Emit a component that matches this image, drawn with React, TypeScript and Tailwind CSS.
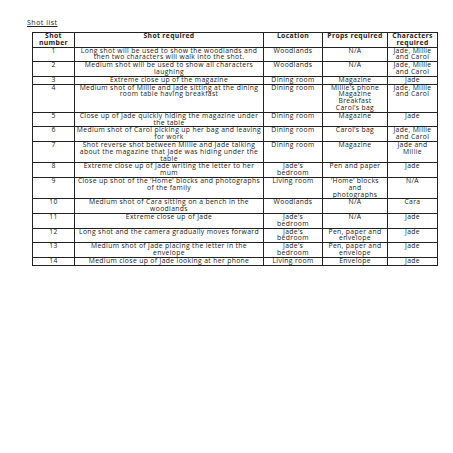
type Row = {
  no: string;
  shot: string[];
  location: string[];
  props: string[];
  chars: string[];
};

const rows: Row[] = [
  {
    no: "1",
    shot: ["Long shot will be used to show the woodlands and", "then two characters will walk into the shot."],
    location: ["Woodlands"],
    props: ["N/A"],
    chars: ["Jade, Millie", "and Carol"],
  },
  {
    no: "2",
    shot: ["Medium shot will be used to show all characters", "laughing"],
    location: ["Woodlands"],
    props: ["N/A"],
    chars: ["Jade, Millie", "and Carol"],
  },
  { no: "3", shot: ["Extreme close up of the magazine"], location: ["Dining room"], props: ["Magazine"], chars: ["Jade"] },
  {
    no: "4",
    shot: ["Medium shot of Millie and Jade sitting at the dining", "room table having breakfast"],
    location: ["Dining room"],
    props: ["Millie\u2019s phone", "Magazine", "Breakfast", "Carol\u2019s bag"],
    chars: ["Jade, Millie", "and Carol"],
  },
  {
    no: "5",
    shot: ["Close up of Jade quickly hiding the magazine under", "the table"],
    location: ["Dining room"],
    props: ["Magazine"],
    chars: ["Jade"],
  },
  {
    no: "6",
    shot: ["Medium shot of Carol picking up her bag and leaving", "for work"],
    location: ["Dining room"],
    props: ["Carol\u2019s bag"],
    chars: ["Jade, Millie", "and Carol"],
  },
  {
    no: "7",
    shot: ["Shot reverse shot between Millie and Jade talking", "about the magazine that Jade was hiding under the", "table"],
    location: ["Dining room"],
    props: ["Magazine"],
    chars: ["Jade and", "Millie"],
  },
  {
    no: "8",
    shot: ["Extreme close up of Jade writing the letter to her", "mum"],
    location: ["Jade\u2019s", "bedroom"],
    props: ["Pen and paper"],
    chars: ["Jade"],
  },
  {
    no: "9",
    shot: ["Close up shot of the \u2018Home\u2019 blocks and photographs", "of the family"],
    location: ["Living room"],
    props: ["\u2018Home\u2019 blocks", "and", "photographs"],
    chars: ["N/A"],
  },
  {
    no: "10",
    shot: ["Medium shot of Cara sitting on a bench in the", "woodlands"],
    location: ["Woodlands"],
    props: ["N/A"],
    chars: ["Cara"],
  },
  { no: "11", shot: ["Extreme close up of Jade"], location: ["Jade\u2019s", "bedroom"], props: ["N/A"], chars: ["Jade"] },
  {
    no: "12",
    shot: ["Long shot and the camera gradually moves forward"],
    location: ["Jade\u2019s", "bedroom"],
    props: ["Pen, paper and", "envelope"],
    chars: ["Jade"],
  },
  {
    no: "13",
    shot: ["Medium shot of jade placing the letter in the", "envelope"],
    location: ["Jade\u2019s", "bedroom"],
    props: ["Pen, paper and", "envelope"],
    chars: ["Jade"],
  },
  { no: "14", shot: ["Medium close up of Jade looking at her phone"], location: ["Living room"], props: ["Envelope"], chars: ["Jade"] },
];

function Lines({ lines }: { lines: string[] }) {
  return (
    <>
      {lines.map((l, i) => (
        <div key={i} className="whitespace-nowrap">
          {l}
        </div>
      ))}
    </>
  );
}

const cell = "border border-[#222] p-0 align-top text-center";

export default function App() {
  return (
    <div
      className="w-[453px] h-[453px] bg-white text-[#222] pt-[19px] pl-[27px]"
      style={{ fontFamily: '"Open Sans", "Liberation Sans", sans-serif' }}
    >
      <div className="text-[7px] leading-[7px] tracking-[0.5px] underline mb-[6px]">Shot list</div>
      <table className="ml-[5px] w-[405px] table-fixed border-collapse text-[6.8px] leading-[6.8px] tracking-[0.35px]">
        <colgroup>
          <col className="w-[42px]" />
          <col className="w-[189px]" />
          <col className="w-[59px]" />
          <col className="w-[65px]" />
          <col className="w-[50px]" />
        </colgroup>
        <thead>
          <tr className="font-bold">
            <th className={cell}>
              <Lines lines={["Shot", "number"]} />
            </th>
            <th className={cell}>Shot required</th>
            <th className={cell}>Location</th>
            <th className={cell}>Props required</th>
            <th className={cell}>
              <Lines lines={["Characters", "required"]} />
            </th>
          </tr>
        </thead>
        <tbody>
          {rows.map((r) => (
            <tr key={r.no}>
              <td className={cell}>{r.no}</td>
              <td className={cell}>
                <Lines lines={r.shot} />
              </td>
              <td className={cell}>
                <Lines lines={r.location} />
              </td>
              <td className={cell}>
                <Lines lines={r.props} />
              </td>
              <td className={cell}>
                <Lines lines={r.chars} />
              </td>
            </tr>
          ))}
        </tbody>
      </table>
    </div>
  );
}
